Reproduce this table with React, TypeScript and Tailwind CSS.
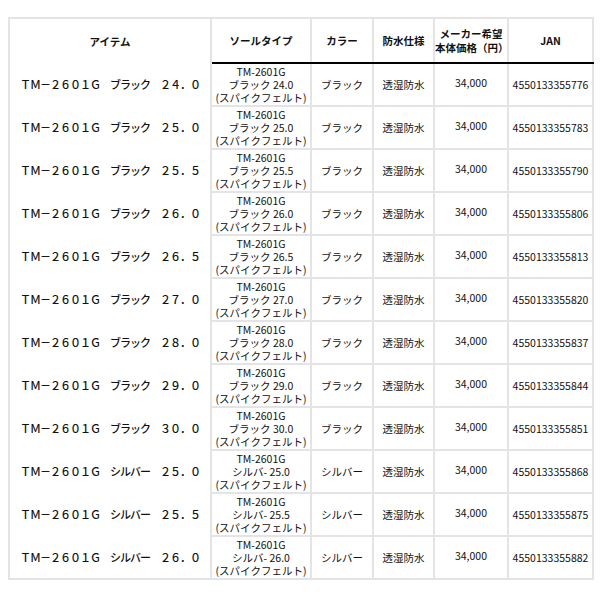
const toWide = (s: string) =>
  s.replace(/[0-9A-Z.]/g, c => String.fromCharCode(c.charCodeAt(0) + 0xfee0)).replace(/-/g, "－").replace(/ /g, "　");

interface Item {
  color: "ブラック" | "シルバー";
  size: string;
  jan: string;
}

const items: Item[] = [
  { color: "ブラック", size: "24.0", jan: "4550133355776" },
  { color: "ブラック", size: "25.0", jan: "4550133355783" },
  { color: "ブラック", size: "25.5", jan: "4550133355790" },
  { color: "ブラック", size: "26.0", jan: "4550133355806" },
  { color: "ブラック", size: "26.5", jan: "4550133355813" },
  { color: "ブラック", size: "27.0", jan: "4550133355820" },
  { color: "ブラック", size: "28.0", jan: "4550133355837" },
  { color: "ブラック", size: "29.0", jan: "4550133355844" },
  { color: "ブラック", size: "30.0", jan: "4550133355851" },
  { color: "シルバー", size: "25.0", jan: "4550133355868" },
  { color: "シルバー", size: "25.5", jan: "4550133355875" },
  { color: "シルバー", size: "26.0", jan: "4550133355882" },
];

const cell = "border-2 border-[#e4e4e4] text-center align-middle p-0";
const head = "border-2 border-[#e4e4e4] border-b-black text-center align-middle font-bold p-0";

export default function App() {
  return (
    <div className="bg-white w-[600px] h-[600px] pt-[17px] pl-[8px] text-[#111] text-[10.5px] leading-[13px]" style={{ fontFamily: '"Noto Sans CJK JP", "Noto Sans", sans-serif' }}>
      <table className="border-collapse table-fixed w-[584px] border-2 border-[#e4e4e4]">
        <colgroup>
          <col className="w-[202px]" />
          <col className="w-[100px]" />
          <col className="w-[62px]" />
          <col className="w-[61px]" />
          <col className="w-[74px]" />
          <col className="w-[85px]" />
        </colgroup>
        <thead>
          <tr className="h-[45px]">
            <th className="border-2 border-[#e4e4e4] border-b-0 text-center align-middle font-bold p-0">アイテム</th>
            <th className={head}>ソールタイプ</th>
            <th className={head}>カラー</th>
            <th className={head}>防水仕様</th>
            <th className={head + " leading-[14px]"}>
              メーカー希望
              <br />
              本体価格（円）
            </th>
            <th className={head}>JAN</th>
          </tr>
        </thead>
        <tbody>
          {items.map(it => {
            const soleColor = it.color === "ブラック" ? "ブラック" : "シルバ-";
            return (
              <tr key={it.jan} className="h-[43px]">
                <td className="border-x-2 border-y-0 border-[#e4e4e4] text-center align-middle p-0 text-[11px] tracking-[-1px] font-medium whitespace-nowrap">
                  {toWide(`TM-2601G ${it.color} ${it.size}`)}
                </td>
                <td className={cell + " whitespace-nowrap overflow-hidden"}>
                  TM-2601G
                  <br />
                  {soleColor} {it.size}
                  <br />
                  (スパイクフェルト)
                </td>
                <td className={cell}>{it.color}</td>
                <td className={cell}>透湿防水</td>
                <td className={cell}>
                  <span className="relative -top-[2px]">34,000</span>
                </td>
                <td className={cell}>{it.jan}</td>
              </tr>
            );
          })}
        </tbody>
      </table>
    </div>
  );
}
